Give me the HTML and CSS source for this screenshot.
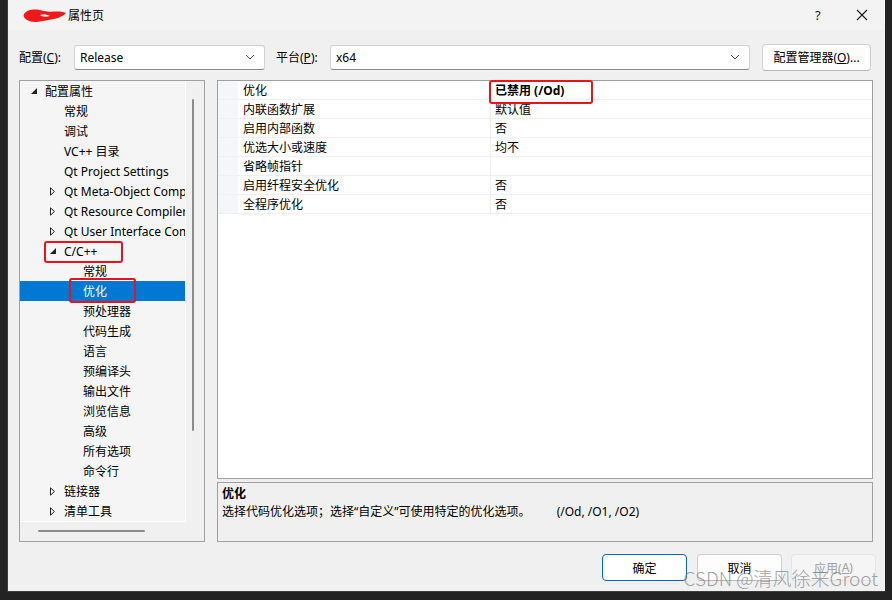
FILE: index.html
```html
<!DOCTYPE html>
<html lang="zh-CN">
<head>
<meta charset="utf-8">
<title>属性页</title>
<link rel="stylesheet" href="styles.css">
</head>
<body>
<div class="desk">
  <div class="dialog">
    <div class="titlebar">
      <svg class="scribble" width="46" height="22" viewBox="0 0 46 22"><path d="M2 9 C6 3 16 4 22 6 C30 8 36 5 44 8 C40 12 34 14 26 15 C18 17 10 18 5 15 C2 13 1 11 2 9 Z" fill="#f01818"/><path d="M18 10 C22 9 26 10 28 11 C24 12 20 12 18 10 Z" fill="#fff"/></svg>
      <span class="title">属性页</span>
      <span class="spacer"></span>
      <span class="help">?</span>
      <svg class="close" width="12" height="12" viewBox="0 0 12 12"><path d="M1 1 L11 11 M11 1 L1 11" stroke="#1a1a1a" stroke-width="1.1"/></svg>
    </div>

    <div class="toolbar">
      <span class="lbl">配置(<u>C</u>):</span>
      <div class="combo combo-cfg"><span>Release</span><svg width="10" height="6" viewBox="0 0 10 6"><path d="M1 1 L5 5 L9 1" fill="none" stroke="#555" stroke-width="1"/></svg></div>
      <span class="lbl lbl-plat">平台(<u>P</u>):</span>
      <div class="combo combo-plat"><span>x64</span><svg width="10" height="6" viewBox="0 0 10 6"><path d="M1 1 L5 5 L9 1" fill="none" stroke="#555" stroke-width="1"/></svg></div>
      <div class="btn btn-mgr">配置管理器(<u>O</u>)...</div>
    </div>

    <div class="main">
      <div class="tree">
        <div class="tree-items">
          <div class="ti l1"><i class="exp"></i>配置属性</div>
          <div class="ti l2">常规</div>
          <div class="ti l2">调试</div>
          <div class="ti l2">VC++ 目录</div>
          <div class="ti l2">Qt Project Settings</div>
          <div class="ti l2"><i class="col"></i>Qt Meta-Object Compiler</div>
          <div class="ti l2"><i class="col"></i>Qt Resource Compiler</div>
          <div class="ti l2"><i class="col"></i>Qt User Interface Compiler</div>
          <div class="ti l2"><i class="exp"></i>C/C++</div>
          <div class="ti l3">常规</div>
          <div class="ti l3 sel">优化</div>
          <div class="ti l3">预处理器</div>
          <div class="ti l3">代码生成</div>
          <div class="ti l3">语言</div>
          <div class="ti l3">预编译头</div>
          <div class="ti l3">输出文件</div>
          <div class="ti l3">浏览信息</div>
          <div class="ti l3">高级</div>
          <div class="ti l3">所有选项</div>
          <div class="ti l3">命令行</div>
          <div class="ti l2"><i class="col"></i>链接器</div>
          <div class="ti l2"><i class="col"></i>清单工具</div>
        </div>
        <div class="vscroll"><div class="vthumb"></div></div>
        <div class="hscroll"><div class="hthumb"></div></div>
        <div class="corner"></div>
      </div>

      <div class="right">
        <div class="grid">
          <div class="row"><div class="gut"></div><div class="name">优化</div><div class="val bold">已禁用 (/Od)</div></div>
          <div class="row"><div class="gut"></div><div class="name">内联函数扩展</div><div class="val">默认值</div></div>
          <div class="row"><div class="gut"></div><div class="name">启用内部函数</div><div class="val">否</div></div>
          <div class="row"><div class="gut"></div><div class="name">优选大小或速度</div><div class="val">均不</div></div>
          <div class="row"><div class="gut"></div><div class="name">省略帧指针</div><div class="val"></div></div>
          <div class="row"><div class="gut"></div><div class="name">启用纤程安全优化</div><div class="val">否</div></div>
          <div class="row"><div class="gut"></div><div class="name">全程序优化</div><div class="val">否</div></div>
        </div>
        <div class="desc">
          <div class="desc-title">优化</div>
          <div class="desc-text"><span>选择代码优化选项；选择“自定义”可使用特定的优化选项。</span><span class="sw">(/Od, /O1, /O2)</span></div>
        </div>
      </div>
    </div>

    <div class="buttons">
      <div class="btn btn-ok">确定</div>
      <div class="btn btn-cancel">取消</div>
      <div class="btn btn-dis">应用(<u>A</u>)</div>
    </div>

    <div class="mark mark-cpp"></div>
    <div class="mark mark-opt"></div>
    <div class="mark mark-val"></div>
    <div class="watermark">CSDN @清风徐来Groot</div>
  </div>
</div>
</body>
</html>
```
FILE: styles.css
```css
* { box-sizing: border-box; }
html, body { margin: 0; padding: 0; }
body {
  width: 892px;
  height: 600px;
  overflow: hidden;
  background: #232323;
  font-family: "Noto Sans", "Noto Sans CJK SC", sans-serif;
  font-size: 12px;
  color: #000;
}
.desk { padding-left: 7px; height: 600px; }
.dialog {
  position: relative;
  width: 878px;
  height: 592px;
  background: #f0f0f0;
  border-left: 1px solid #3e3e3e;
  border-bottom: 1px solid #3e3e3e;
  display: flex;
  flex-direction: column;
}
.titlebar {
  height: 30px;
  background: #f3f3f3;
  display: flex;
  align-items: center;
  padding-left: 14px;
}
.scribble { margin-top: 2px; }
.title { font-size: 12px; }
.spacer { flex: 1; }
.help { font-size: 13px; width: 12px; margin-right: 29px; color: #1a1a1a; }
.close { margin-right: 17px; }

.toolbar {
  margin-top: 14px;
  height: 26px;
  display: flex;
  align-items: center;
  padding-left: 11px;
}
.lbl { width: 55px; }
.lbl-plat { width: 54px; margin-left: 11px; }
.combo {
  height: 25px;
  background: #fff;
  border: 1px solid #d2d2d2;
  border-bottom-color: #8a8a8a;
  border-radius: 3px;
  display: flex;
  align-items: center;
  justify-content: space-between;
  padding: 0 9px 0 5px;
}
.combo-cfg { width: 191px; }
.combo-plat { width: 420px; }
.btn {
  height: 27px;
  width: 85px;
  background: #fdfdfd;
  border: 1px solid #d0d0d0;
  border-bottom-color: #b8b8b8;
  border-radius: 4px;
  display: flex;
  align-items: center;
  justify-content: center;
}
.btn-mgr { width: 109px; margin-left: 12px; }

.main {
  margin-top: 10px;
  height: 462px;
  display: flex;
  padding-left: 11px;
}
.tree {
  width: 186px;
  height: 462px;
  border: 1px solid #a0a0a0;
  display: grid;
  grid-template-columns: 166px 18px;
  grid-template-rows: 441px 18px;
  background: #f0f0f0;
}
.tree-items {
  background: #f5f5f5;
  border-right: 1px solid #fff;
  border-bottom: 1px solid #fff;
  overflow: hidden;
}
.ti {
  height: 20px;
  line-height: 20px;
  padding-top: 1px;
  white-space: nowrap;
  position: relative;
}
.l1 { padding-left: 25px; }
.l2 { padding-left: 44px; }
.l3 { padding-left: 63px; }
.sel { background: #0078d4; color: #fff; }
.ti i {
  position: absolute;
  display: block;
}
.l1 i { left: 11px; }
.l2 i { left: 30px; }
i.exp {
  top: 7px;
  width: 0; height: 0;
  border-left: 6px solid transparent;
  border-bottom: 6px solid #222;
}
i.col {
  top: 6px;
  width: 5px; height: 9px;
  background: no-repeat center/5px 9px url("data:image/svg+xml;utf8,<svg xmlns='http://www.w3.org/2000/svg' width='5' height='9' viewBox='0 0 5 9'><path d='M0.5 0.8 L4.4 4.5 L0.5 8.2 Z' fill='none' stroke='%23222' stroke-width='1'/></svg>");
}
.vscroll { position: relative; }
.vthumb {
  position: absolute;
  left: 6px;
  top: 18px;
  width: 2px;
  height: 332px;
  background: #8b8b8b;
  border-radius: 1px;
}
.hscroll { position: relative; }
.hthumb {
  position: absolute;
  left: 18px;
  top: 8px;
  width: 107px;
  height: 2px;
  background: #8b8b8b;
  border-radius: 1px;
}

.right {
  margin-left: 12px;
  width: 656px;
  display: flex;
  flex-direction: column;
}
.grid {
  height: 399px;
  border: 1px solid #a0a0a0;
  background: #fff;
}
.row {
  display: flex;
  height: 19px;
  border-bottom: 1px solid #f0f0f0;
}
.gut { width: 20px; background: #f4f6fa; }
.name {
  width: 253px;
  padding-left: 5px;
  line-height: 20px;
  border-right: 1px solid #f0f0f0;
}
.val {
  flex: 1;
  padding-left: 4px;
  line-height: 20px;
}
.bold { font-weight: bold; }
.desc {
  margin-top: 3px;
  height: 60px;
  border: 1px solid #a0a0a0;
  padding: 2px 4px;
}
.desc-title { font-weight: bold; line-height: 18px; }
.desc-text { line-height: 18px; }
.sw { margin-left: 26px; }

.buttons {
  margin-top: 12px;
  display: flex;
  justify-content: flex-end;
  padding-right: 9px;
}
.btn-ok { border: 1px solid #0067c0; background: #fff; }
.btn-cancel { margin-left: 10px; }
.btn-dis { margin-left: 9px; color: #a0a0a0; background: #f5f5f5; border-color: #e5e5e5; }

.mark {
  position: absolute;
  border: 2px solid #e8141a;
  border-radius: 3px;
}
.mark-cpp { left: 36px; top: 241px; width: 79px; height: 22px; }
.mark-opt { left: 61px; top: 278px; width: 67px; height: 25px; }
.mark-val { left: 481px; top: 80px; width: 104px; height: 24px; }

.watermark {
  position: absolute;
  right: 7px;
  bottom: 0;
  font-family: "Noto Sans CJK SC", sans-serif;
  font-weight: 300;
  font-size: 19px;
  color: rgba(125,125,125,0.72);
}
```
